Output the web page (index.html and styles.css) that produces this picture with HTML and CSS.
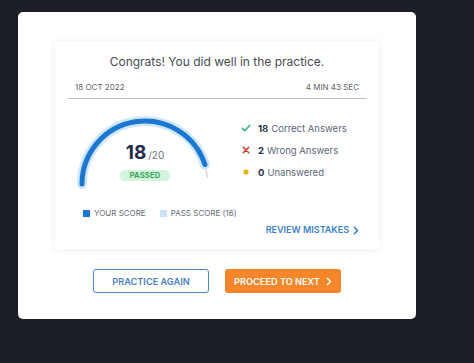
FILE: index.html
```html
<!DOCTYPE html>
<html>
<head>
<meta charset="utf-8">
<link rel="stylesheet" href="styles.css">
</head>
<body>
<div class="modal">
  <div class="card">
    <div class="title">Congrats! You did well in the practice.</div>
    <div class="meta"><span>18 OCT 2022</span><span>4 MIN 43 SEC</span></div>
    <div class="main">
      <div class="gauge">
        <svg class="gauge-svg" width="144" height="80" viewBox="0 0 144 80">
          <path d="M 9 73 A 63 63 0 0 1 131.2 53.5" fill="none" stroke="#d9e6f1" stroke-width="1.5"/>
          <path d="M 131.2 53.5 A 63 63 0 0 1 134.5 66" fill="none" stroke="#d3d8de" stroke-width="1.5" stroke-linecap="round"/>
          <path d="M 9 73 A 63 63 0 0 1 131.9 53.5" fill="none" stroke="#cfe5f8" stroke-width="10" stroke-linecap="round"/>
          <path d="M 9 73 A 63 63 0 0 1 131.9 53.5" fill="none" stroke="#1a78d2" stroke-width="5" stroke-linecap="round"/>
        </svg>
        <div class="gauge-text">
          <div class="score"><span class="big">18</span><span class="of">/20</span></div>
          <div class="badge">PASSED</div>
        </div>
      </div>
      <ul class="stats">
        <li><svg class="ic" width="10" height="10" viewBox="0 0 10 10"><polyline points="1.2,5.2 3.8,7.8 8.8,2.2" fill="none" stroke="#2fb27c" stroke-width="1.5" stroke-linecap="round" stroke-linejoin="round"/></svg><b>18</b> Correct Answers</li>
        <li><svg class="ic" width="10" height="10" viewBox="0 0 10 10"><path d="M2.2 2.2 L7.8 7.8 M7.8 2.2 L2.2 7.8" stroke="#d8372c" stroke-width="1.5" stroke-linecap="round"/></svg><b>2</b> Wrong Answers</li>
        <li><svg class="ic" width="10" height="10" viewBox="0 0 10 10"><circle cx="5" cy="5" r="2.6" fill="#e7b10a"/></svg><b>0</b> Unanswered</li>
      </ul>
    </div>
    <div class="legend">
      <span class="key"><i class="sq dark"></i>YOUR SCORE</span>
      <span class="key"><i class="sq light"></i>PASS SCORE (16)</span>
    </div>
    <div class="review"><a class="review-link">REVIEW MISTAKES<svg width="6" height="9" viewBox="0 0 6 9"><polyline points="1.3,1.2 4.5,4.5 1.3,7.8" fill="none" stroke="#3b82c6" stroke-width="1.6" stroke-linecap="round" stroke-linejoin="round"/></svg></a></div>
  </div>
  <div class="actions">
    <button class="btn outline">PRACTICE AGAIN</button>
    <button class="btn solid">PROCEED TO NEXT<svg width="6" height="9" viewBox="0 0 6 9"><polyline points="1.3,1.2 4.5,4.5 1.3,7.8" fill="none" stroke="#ffffff" stroke-width="1.5" stroke-linecap="round" stroke-linejoin="round"/></svg></button>
  </div>
</div>
</body>
</html>
```

FILE: styles.css
```css
html, body {
  margin: 0;
  padding: 0;
}
body {
  background: #1b1e27;
  width: 474px;
  height: 363px;
  overflow: hidden;
  font-family: Inter, "Noto Sans", "Liberation Sans", sans-serif;
}
.modal {
  margin: 12px 0 0 18px;
  width: 398px;
  height: 307px;
  background: #ffffff;
  border-radius: 5px;
  box-sizing: border-box;
  padding-top: 29px;
  display: flex;
  flex-direction: column;
  align-items: center;
}
.card {
  width: 324px;
  height: 208px;
  box-sizing: border-box;
  padding: 13px 13px 0;
  border-radius: 3px;
  box-shadow: 0 0 7px rgba(40, 50, 110, 0.09);
  display: flex;
  flex-direction: column;
}
.title {
  font-size: 12px;
  line-height: 16px;
  text-align: center;
  color: #464b54;
}
.meta {
  margin-top: 11px;
  padding: 0 7px 5px;
  display: flex;
  justify-content: space-between;
  font-size: 8px;
  line-height: 12px;
  color: #5d626b;
  border-bottom: 1.5px solid #b9bec8;
}
.main {
  display: flex;
  align-items: flex-start;
}
.gauge {
  margin: 12px 0 0 5px;
  width: 144px;
  height: 80px;
  display: grid;
}
.gauge-svg {
  grid-area: 1 / 1;
  display: block;
}
.gauge-text {
  grid-area: 1 / 1;
  display: flex;
  flex-direction: column;
  align-items: center;
  padding-top: 31px;
}
.score {
  display: flex;
  align-items: baseline;
  color: #1e2b4a;
}
.big {
  font-size: 19px;
  font-weight: 700;
  line-height: 22px;
}
.of {
  font-size: 10px;
  color: #6d7480;
  margin-left: 2px;
}
.badge {
  margin-top: 6px;
  width: 50px;
  height: 11px;
  border-radius: 6px;
  background: #d3f5dc;
  color: #3aa85a;
  font-size: 7.5px;
  font-weight: 700;
  line-height: 11px;
  text-align: center;
  letter-spacing: 0.2px;
}
.stats {
  list-style: none;
  margin: 18px 0 0 24px;
  padding: 0;
}
.stats li {
  display: flex;
  align-items: center;
  height: 22px;
  font-size: 9.5px;
  color: #5b6579;
}
.stats b {
  color: #27324b;
  font-weight: 700;
  margin-right: 3px;
}
.ic {
  margin-right: 7px;
  flex: none;
}
.legend {
  margin: 16px 0 0 15px;
  display: flex;
  gap: 14px;
  font-size: 8px;
  line-height: 12px;
  color: #666b74;
}
.key {
  display: flex;
  align-items: center;
}
.sq {
  display: inline-block;
  width: 7px;
  height: 7px;
  margin-right: 4px;
}
.sq.dark { background: #1a78d2; }
.sq.light { background: #c9e2f7; }
.review {
  margin: 5px 7px 0 0;
  display: flex;
  justify-content: flex-end;
}
.review-link {
  display: flex;
  align-items: center;
  gap: 4px;
  font-size: 9px;
  line-height: 12px;
  font-weight: 600;
  color: #3b82c6;
}
.actions {
  margin-top: 20px;
  display: flex;
  gap: 16px;
}
.btn {
  width: 116px;
  height: 24px;
  box-sizing: border-box;
  border-radius: 3px;
  font-family: Inter, "Noto Sans", "Liberation Sans", sans-serif;
  font-size: 9.2px;
  font-weight: 600;
  display: flex;
  align-items: center;
  justify-content: center;
  gap: 6px;
  padding: 0;
}
.btn.outline {
  background: #ffffff;
  border: 1.5px solid #4a86c8;
  color: #4b7fc0;
}
.btn.solid {
  background: #f5862a;
  border: none;
  color: #ffffff;
}
```
